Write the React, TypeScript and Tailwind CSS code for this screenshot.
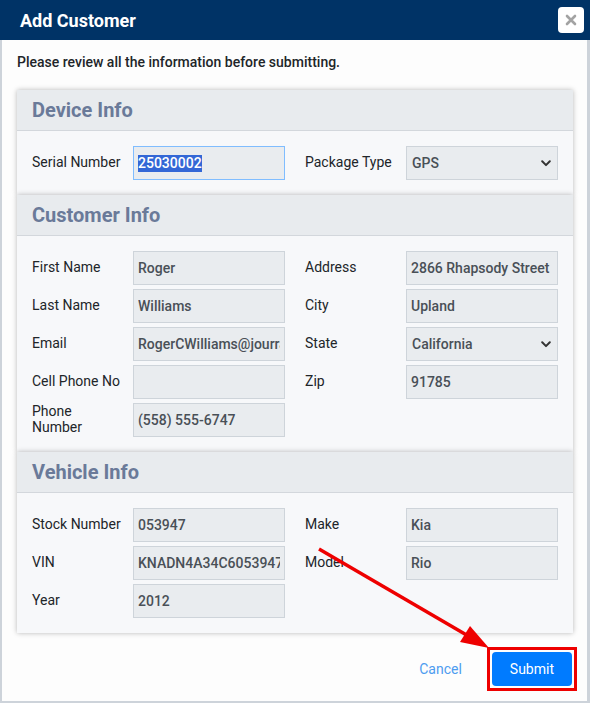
import React from "react";

type Field = { label: string; value?: string; select?: boolean; selected?: boolean };

const sections: { title: string; rows: (Field | null)[][] }[] = [
  {
    title: "Device Info",
    rows: [[{ label: "Serial Number", value: "25030002", selected: true }, { label: "Package Type", value: "GPS", select: true }]],
  },
  {
    title: "Customer Info",
    rows: [
      [{ label: "First Name", value: "Roger" }, { label: "Address", value: "2866 Rhapsody Street" }],
      [{ label: "Last Name", value: "Williams" }, { label: "City", value: "Upland" }],
      [{ label: "Email", value: "RogerCWilliams@jourrapide.com" }, { label: "State", value: "California", select: true }],
      [{ label: "Cell Phone No", value: "" }, { label: "Zip", value: "91785" }],
      [{ label: "Phone Number", value: "(558) 555-6747" }, null],
    ],
  },
  {
    title: "Vehicle Info",
    rows: [
      [{ label: "Stock Number", value: "053947" }, { label: "Make", value: "Kia" }],
      [{ label: "VIN", value: "KNADN4A34C6053947" }, { label: "Model", value: "Rio" }],
      [{ label: "Year", value: "2012" }, null],
    ],
  },
];

function Chevron() {
  return (
    <svg width="10" height="7" viewBox="0 0 10 7" className="shrink-0">
      <path d="M1.2 1.3 L5 5.1 L8.8 1.3" fill="none" stroke="#333" strokeWidth="2" strokeLinecap="round" strokeLinejoin="round" />
    </svg>
  );
}

function FieldBox({ field }: { field: Field }) {
  if (field.selected) {
    return (
      <div className="w-[152px] h-[34px] flex items-center border border-[#80bdff] bg-[#e9ecef] pl-[4px]">
        <span className="bg-[#3367d6] text-white font-medium leading-[17px]">{field.value}</span>
      </div>
    );
  }
  if (field.select) {
    return (
      <div className="w-[152px] h-[34px] flex items-center justify-between border border-[#ced4da] bg-[#e9ecef] pl-[5px] pr-[6px] text-[#495057] font-medium">
        <span>{field.value}</span>
        <Chevron />
      </div>
    );
  }
  return (
    <input
      readOnly
      value={field.value}
      className="w-[152px] h-[34px] border border-[#ced4da] bg-[#e9ecef] pl-[4px] pr-[4px] text-[#495057] font-medium outline-none"
    />
  );
}

function FieldRow({ field }: { field: Field | null }) {
  if (!field) return <div />;
  return (
    <div className="flex items-center">
      <label className="w-[101px] pr-2 text-[#212529] leading-[16px] -mt-[2px]">{field.label}</label>
      <FieldBox field={field} />
    </div>
  );
}

export default function App() {
  return (
    <div className="relative w-[590px] text-[14px] font-['Roboto',sans-serif]">
      <div className="h-10 bg-[#003366] flex items-center justify-between pl-5 pr-[6px]">
        <h1 className="text-white text-[18px] font-bold">Add Customer</h1>
        <button className="w-[26px] h-[26px] bg-white rounded-[4px] flex items-center justify-center">
          <svg width="12" height="12" viewBox="0 0 12 12">
            <path d="M2 2 L10 10 M10 2 L2 10" stroke="#a3a3a3" strokeWidth="2.6" strokeLinecap="round" />
          </svg>
        </button>
      </div>

      <div className="bg-[#fdfdfd] border-l-2 border-r-[3px] border-b-2 border-[#cdd3da] pl-[15px] pr-[14px] pt-3 pb-[10px]">
        <p className="text-[#212529] font-medium leading-5">Please review all the information before submitting.</p>

        <div className="mt-[18px]">
          {sections.map((s) => (
            <section key={s.title} className="relative bg-[#f7f8fa] shadow-[0_0_5px_rgba(0,0,0,0.28)]">
              <div className="h-[41px] bg-[#e8ebee] border-b border-[#d3d7dc] flex items-center px-[15px]">
                <h2 className="text-[20px] font-bold text-[#6a7a99]">{s.title}</h2>
              </div>
              <div className="grid grid-cols-2 gap-x-5 gap-y-1 px-[15px] py-[15px]">
                {s.rows.map((row, i) => (
                  <React.Fragment key={i}>
                    <FieldRow field={row[0]} />
                    <FieldRow field={row[1]} />
                  </React.Fragment>
                ))}
              </div>
            </section>
          ))}
        </div>

        <div className="flex items-center justify-end mt-[14px] -mr-[4px]">
          <button className="text-[#4d9cf0] mr-[25px]">Cancel</button>
          <div className="border-[3px] border-[#ee0000] p-[2px]">
            <button className="h-[34px] px-[18px] bg-[#007bff] text-white rounded-[4px]">Submit</button>
          </div>
        </div>
      </div>

      <svg className="absolute left-0 top-0 pointer-events-none" width="590" height="704" viewBox="0 0 590 704">
        <line x1="319" y1="549" x2="470" y2="637" stroke="#ee0000" strokeWidth="3.5" />
        <polygon points="489,648 460,642 470,626" fill="#ee0000" />
      </svg>
    </div>
  );
}
